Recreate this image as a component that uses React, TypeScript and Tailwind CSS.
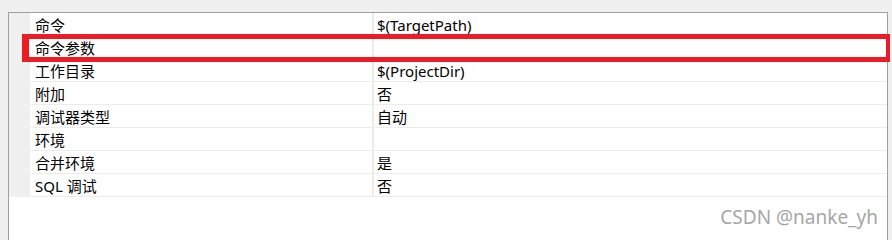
import React from "react";

const rows: [string, string][] = [
  ["命令", "$(TargetPath)"],
  ["命令参数", ""],
  ["工作目录", "$(ProjectDir)"],
  ["附加", "否"],
  ["调试器类型", "自动"],
  ["环境", ""],
  ["合并环境", "是"],
  ["SQL 调试", "否"],
];

export default function App() {
  return (
    <div
      className="relative w-[892px] h-[240px] overflow-hidden bg-[#f0f0f0] pt-[12px] pl-[8px] pr-[4px]"
      style={{ fontFamily: '"Segoe UI", "Noto Sans", "Noto Sans CJK SC", sans-serif' }}
    >
      <div className="h-[228px] border border-b-0 border-[#a0a0a0] bg-white">
        {rows.map(([k, v]) => (
          <div key={k} className="flex h-[23px]">
            <div className="w-[21px] shrink-0 bg-[#f0f0f0]" />
            <div className="flex flex-1 border-b border-[#ececec]">
              <div className="w-[342px] shrink-0 pl-[5px] text-[15px] leading-[24px] text-black">
                {k}
              </div>
              <div className="flex-1 border-l-2 border-[#ececec] pl-[3px] text-[15px] leading-[24px] text-black">
                {v}
              </div>
            </div>
          </div>
        ))}
      </div>
      <div className="absolute left-[22px] top-[34px] h-[28px] w-[868px] border-t-[5px] border-b-[5px] border-l-[7px] border-r-[4px] border-[#ed1c24]" />
      <div
        className="absolute right-[14px] top-[204px] text-[19px] leading-[26px] text-[#a6a6a6]"
        style={{ fontFamily: '"Noto Sans", "Open Sans", sans-serif' }}
      >
        CSDN @nanke_yh
      </div>
    </div>
  );
}
